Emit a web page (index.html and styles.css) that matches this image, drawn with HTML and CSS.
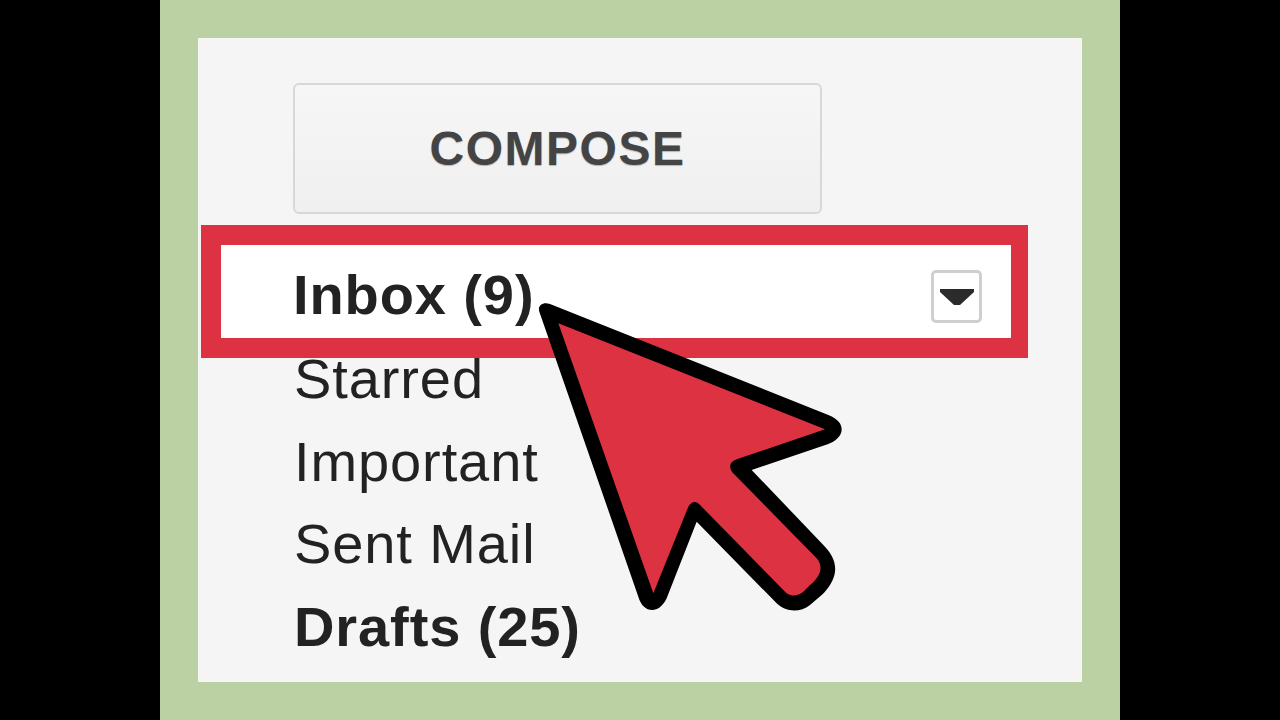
FILE: index.html
```html
<!DOCTYPE html>
<html lang="en">
<head>
<meta charset="UTF-8">
<title>Inbox</title>
<link rel="stylesheet" href="styles.css">
</head>
<body>
<div class="frame">
    <div class="panel">
        <button class="compose" type="button">COMPOSE</button>
        <div class="highlight">
            <div class="inbox-row">
                <span class="label-bold">Inbox (9)</span>
                <span class="menu-btn">
                    <svg width="34" height="16" viewBox="0 0 34 16"><polygon points="0,0 34,0 34,3 20,16 14,16 0,3" fill="#2b2b2b"/></svg>
                </span>
            </div>
        </div>
        <ul class="labels">
            <li>Starred</li>
            <li>Important</li>
            <li>Sent Mail</li>
            <li class="label-bold">Drafts (25)</li>
        </ul>
    </div>
    <svg class="cursor" width="520" height="400" viewBox="0 0 1560 1200">
        <path fill="#000" d="M58 275 C52 255 70 245 90 252 L925 585 C955 597 965 612 965 628 C965 648 948 664 925 672 L695 750 L915 980 C938 1005 948 1030 945 1055 C942 1080 925 1107 905 1125 L870 1155 C840 1178 800 1178 770 1150 L530 905 L440 1135 C428 1160 412 1170 397 1170 C378 1170 362 1155 355 1130 Z"/>
        <path fill="#dd3242" d="M115 310 L915 628 L650 718 C625 727 625 748 645 765 L890 1015 C903 1030 903 1045 900 1055 C895 1072 880 1087 870 1095 L850 1115 C830 1130 810 1130 795 1115 L545 860 C530 840 515 842 505 860 L400 1120 Z"/>
    </svg>
</div>
</body>
</html>
```

FILE: styles.css
```css
body {
    margin: 0;
    width: 1280px;
    height: 720px;
    overflow: hidden;
    background-color: #000;
    font-family: "Liberation Sans", Arial, sans-serif;
}
.frame {
    position: relative;
    width: 960px;
    height: 720px;
    margin: 0 auto;
    padding: 38px;
    box-sizing: border-box;
    background-color: #bbd1a3;
}
.panel {
    height: 644px;
    padding-top: 45px;
    box-sizing: border-box;
    background-color: #f5f5f5;
}
.compose {
    display: block;
    width: 529px;
    height: 131px;
    margin-left: 95px;
    padding: 0;
    border: 2px solid #d8d8d8;
    border-radius: 6px;
    background: linear-gradient(#f6f6f6, #f0f0f0);
    color: #444;
    font-family: inherit;
    font-size: 48px;
    font-weight: bold;
    letter-spacing: 1.5px;
    text-shadow: 0 1px 1px rgba(0, 0, 0, 0.25);
}
.highlight {
    width: 827px;
    height: 133px;
    margin: 11px 0 0 3px;
    border: solid #dd3242;
    border-width: 20px 17px 20px 20px;
    box-sizing: border-box;
    background-color: #fff;
}
.inbox-row {
    display: flex;
    align-items: center;
    justify-content: space-between;
    height: 93px;
    padding: 6px 29px 0 72px;
    box-sizing: border-box;
    color: #222;
    font-size: 56px;
    letter-spacing: 0.9px;
    line-height: 41px;
}
.label-bold {
    font-weight: bold;
}
.menu-btn {
    display: flex;
    align-items: center;
    justify-content: center;
    width: 51px;
    height: 53px;
    margin-top: 4px;
    border: 3px solid #cfcfcf;
    border-radius: 5px;
    box-sizing: border-box;
    background-color: #fff;
    filter: blur(0.6px);
}
.labels {
    display: flex;
    flex-direction: column;
    gap: 41.5px;
    margin: 0;
    padding: 0 0 0 96px;
    list-style: none;
    color: #222;
    font-size: 56px;
    letter-spacing: 0.9px;
    line-height: 41px;
}
.cursor {
    position: absolute;
    left: 360px;
    top: 220px;
}
```
